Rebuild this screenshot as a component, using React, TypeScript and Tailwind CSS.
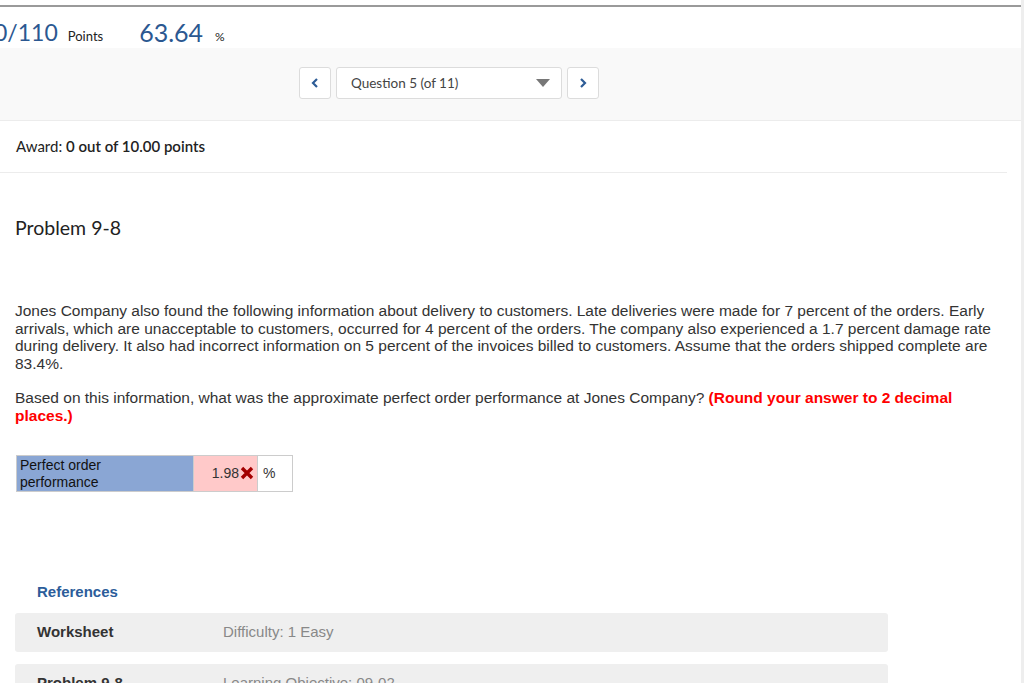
import React from "react";

export default function App() {
  return (
    <div className="w-[1024px] h-[683px] overflow-hidden bg-white flex items-start">
      <div className="w-[1021px] shrink-0">
        <div className="h-[5px] bg-white" />
        <div className="h-[2px] bg-[#9a9a9a]" />
        {/* header */}
        <div className="h-[41px] flex items-end pb-[1px] bg-white" style={{ fontFamily: "Lato, 'Open Sans', sans-serif" }}>
          <span className="ml-[-6px] text-[23px] leading-[30px] text-[#2b5891]">0/110</span>
          <span className="ml-[10px] text-[13px] leading-[22px] text-[#222]">Points</span>
          <span className="ml-[36px] text-[25px] leading-[30px] text-[#2b5891]">63.64</span>
          <span className="ml-[12px] text-[12px] leading-[20px] text-[#222]">%</span>
        </div>
        {/* nav band */}
        <div className="h-[73px] bg-[#f9f9f9] border-b border-[#ececec] flex items-start pt-[19px] pl-[299px] gap-[5px]">
          <button className="w-[32px] h-[32px] bg-white border border-[#dcdcdc] rounded-[3px] flex items-center justify-center">
            <svg width="10" height="12" viewBox="0 0 10 12"><path d="M7 2 L3 6 L7 10" fill="none" stroke="#2d5c96" strokeWidth="2.2" /></svg>
          </button>
          <div className="w-[226px] h-[32px] bg-white border border-[#dcdcdc] rounded-[3px] flex items-center pl-[14px] pr-[11px]">
            <span className="flex-1 text-[13.5px] text-[#444]" style={{ fontFamily: "Lato, 'Open Sans', sans-serif" }}>Question 5 (of 11)</span>
            <svg width="14" height="8" viewBox="0 0 14 8"><path d="M0 0 L14 0 L7 8 Z" fill="#777" /></svg>
          </div>
          <button className="w-[32px] h-[32px] bg-white border border-[#dcdcdc] rounded-[3px] flex items-center justify-center">
            <svg width="10" height="12" viewBox="0 0 10 12"><path d="M3 2 L7 6 L3 10" fill="none" stroke="#2d5c96" strokeWidth="2.2" /></svg>
          </button>
        </div>
        {/* award */}
        <div className="w-[1007px] h-[52px] border-b border-[#ececec] flex items-center pl-[16px] text-[15px] text-[#222]" style={{ fontFamily: "Lato, 'Open Sans', sans-serif" }}>
          <span>Award:&nbsp;</span><span className="font-semibold">0 out of 10.00 points</span>
        </div>
        {/* problem */}
        <div className="pl-[15px] pt-[43px] text-[19.5px] leading-[24px] text-[#222]" style={{ fontFamily: "Lato, 'Open Sans', sans-serif" }}>
          Problem 9-8
        </div>
        <div className="pl-[15px] w-[1008px] pt-[62px] text-[15.5px] leading-[17.6px] text-[#333]" style={{ fontFamily: "'Liberation Sans', Arial, sans-serif" }}>
          <p>
            Jones Company also found the following information about delivery to customers. Late deliveries were made for 7 percent of the orders. Early arrivals, which are unacceptable to customers, occurred for 4 percent of the orders. The company also experienced a 1.7 percent damage rate during delivery. It also had incorrect information on 5 percent of the invoices billed to customers. Assume that the orders shipped complete are 83.4%.
          </p>
          <p className="mt-[17px]">
            Based on this information, what was the approximate perfect order performance at Jones Company?{" "}
            <span className="font-bold text-[#ff0000]">(Round your answer to 2 decimal places.)</span>
          </p>
          {/* table */}
          <div className="mt-[30px] ml-[1px] flex w-[277px] h-[37px] border border-[#cccccc] text-[14px] leading-[17px]">
            <div className="w-[177px] bg-[#8aa6d4] text-[#111] pl-[3px] pt-[1px] border-r border-[#cccccc]">Perfect order<br />performance</div>
            <div className="w-[64px] bg-[#ffc9c9] flex items-center justify-end pr-[3px] text-[#333] border-r border-[#cccccc]">
              <span>1.98</span>
              <svg width="14" height="14" viewBox="0 0 14 14" className="ml-[1px]"><path d="M2 2 L12 12 M12 2 L2 12" stroke="#a30000" strokeWidth="3.4" strokeLinecap="butt" /></svg>
            </div>
            <div className="flex-1 bg-white flex items-center pl-[5px] text-[#333]">%</div>
          </div>
        </div>
        {/* references */}
        <div className="pl-[37px] pt-[91px] text-[15px] leading-[18px] font-bold text-[#2c5d9a]" style={{ fontFamily: "'Liberation Sans', Arial, sans-serif" }}>
          References
        </div>
        <div className="ml-[15px] w-[873px] mt-[12px] flex flex-col gap-[12px]" style={{ fontFamily: "'Liberation Sans', Arial, sans-serif" }}>
          <div className="h-[39px] bg-[#efefef] rounded-[3px] flex items-center text-[15px]">
            <span className="pl-[22px] w-[208px] font-bold text-[#333]">Worksheet</span>
            <span className="text-[#888]">Difficulty: 1 Easy</span>
          </div>
          <div className="h-[39px] bg-[#efefef] rounded-[3px] flex items-center text-[15px]">
            <span className="pl-[22px] w-[208px] font-bold text-[#333]">Problem 9-8</span>
            <span className="text-[#888]">Learning Objective: 09-02</span>
          </div>
        </div>
      </div>
      <div className="w-[3px] h-[683px] bg-[#eeeeee]" />
    </div>
  );
}
